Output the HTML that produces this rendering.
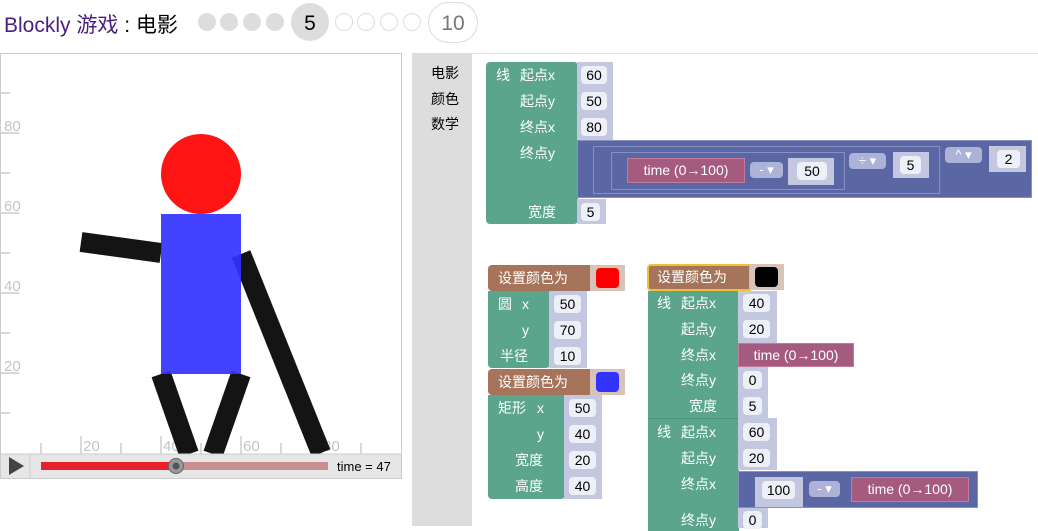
<!DOCTYPE html>
<html><head><meta charset="utf-8"><style>
*{margin:0;padding:0;box-sizing:border-box}
body{width:1038px;height:526px;overflow:hidden;background:#fff;font-family:"Liberation Sans","Noto Sans CJK SC",sans-serif;position:relative}
.a{position:absolute}
.g{position:absolute;background:#5ba58c;border-radius:4px}
.lv{position:absolute;background:#c3c7df}
.f{position:absolute;background:#eef0f7;border-radius:4px;color:#000;font-size:14px;text-align:center;line-height:18px}
.t{position:absolute;color:#fff;font-size:14px;line-height:18px;white-space:nowrap}
.m{position:absolute;background:#5b67a5;border:1px solid #8890c2}
.tm{position:absolute;background:#a55b80;color:#fff;font-size:14px;text-align:center;border:1px solid #c07a9c}
.dd{position:absolute;background:#adb3d6;border-radius:4px;color:#fff;font-size:13px;text-align:center;line-height:16px}
.br{position:absolute;background:#a5745b;border-radius:4px 0 0 4px}
.cf{position:absolute;background:#d8c3b8}
.sw{position:absolute;border-radius:4px}
</style></head><body>
<div class="a" style="left:4px;top:9px;font-size:21px;color:#4b1f82;white-space:nowrap">Blockly 游戏<span style="color:#000"> : 电影</span></div>
<svg class="a" style="left:190px;top:0" width="300" height="46">
<g fill="#ddd"><circle cx="17" cy="22" r="9"/><circle cx="39" cy="22" r="9"/><circle cx="62" cy="22" r="9"/><circle cx="85" cy="22" r="9"/><circle cx="120" cy="22" r="19"/></g>
<g fill="none" stroke="#ddd"><circle cx="154" cy="22" r="8.5"/><circle cx="176" cy="22" r="8.5"/><circle cx="199" cy="22" r="8.5"/><circle cx="222" cy="22" r="8.5"/><rect x="238.5" y="2.5" width="49" height="40" rx="20"/></g>
<text x="120" y="30" font-size="21" text-anchor="middle" fill="#000" font-family="Liberation Sans">5</text>
<text x="263" y="30" font-size="21" text-anchor="middle" fill="#777" font-family="Liberation Sans">10</text>
</svg>
<svg class="a" style="left:0;top:53px" width="402" height="426">
<rect x="0.5" y="0.5" width="401" height="425" fill="#fff" stroke="#ccc"/>
<g stroke="#ccc" stroke-width="1.5"><line x1="0" y1="40" x2="10" y2="40"/><line x1="0" y1="120" x2="10" y2="120"/><line x1="0" y1="200" x2="10" y2="200"/><line x1="0" y1="280" x2="10" y2="280"/><line x1="0" y1="360" x2="10" y2="360"/>
<line x1="0" y1="80" x2="19" y2="80"/><line x1="0" y1="160" x2="19" y2="160"/><line x1="0" y1="240" x2="19" y2="240"/><line x1="0" y1="320" x2="19" y2="320"/>
<line x1="41" y1="401" x2="41" y2="390"/><line x1="121" y1="401" x2="121" y2="390"/><line x1="201" y1="401" x2="201" y2="390"/><line x1="281" y1="401" x2="281" y2="390"/><line x1="361" y1="401" x2="361" y2="390"/>
<line x1="81" y1="401" x2="81" y2="383"/><line x1="161" y1="401" x2="161" y2="383"/><line x1="241" y1="401" x2="241" y2="383"/><line x1="321" y1="401" x2="321" y2="383"/></g>
<g fill="#c4c4c4" font-size="15" font-family="Liberation Sans"><text x="4" y="78">80</text><text x="4" y="158">60</text><text x="4" y="238">40</text><text x="4" y="318">20</text>
<text x="83" y="398">20</text><text x="163" y="398">40</text><text x="243" y="398">60</text><text x="323" y="398">80</text></g>
<g stroke="#141414" stroke-width="20"><line x1="81" y1="189" x2="161" y2="200"/><line x1="241" y1="201" x2="321" y2="400"/><line x1="161" y1="321" x2="189" y2="401"/><line x1="241" y1="321" x2="213" y2="401"/></g>
<circle cx="201" cy="121" r="40" fill="#ff1414"/>
<rect x="161" y="161" width="80" height="160" fill="#3333ff" opacity="0.92"/>
<rect x="1" y="401" width="400" height="24" fill="#e6e6e6"/>
<line x1="0" y1="401" x2="402" y2="401" stroke="#ccc"/>
<line x1="30" y1="401" x2="30" y2="425" stroke="#ccc"/>
<path d="M9 404 L24 413 L9 422Z" fill="#444"/>
<rect x="41" y="409" width="135" height="8" fill="#e8202a"/><rect x="176" y="409" width="152" height="8" fill="#c99090"/>
<circle cx="176" cy="413" r="7.5" fill="#999" stroke="#666"/><circle cx="176" cy="413" r="3.5" fill="#555"/>
<text x="337" y="418" font-size="13" fill="#000" font-family="Liberation Sans">time = 47</text>
</svg>
<div class="a" style="left:412px;top:53px;width:60px;height:473px;background:#ddd"></div>
<div class="a" style="left:472px;top:53px;width:566px;height:1px;background:#e4e4e4"></div>
<div class="a" style="left:431px;top:61px;font-size:14px;line-height:25.5px;color:#000">电影<br>颜色<br>数学</div>

<div class="g" style="left:486px;top:62px;width:92px;height:162px"></div>
<div class="lv" style="left:577px;top:62px;width:36px;height:78px"></div>
<div class="lv" style="left:577px;top:199px;width:29px;height:25px"></div>
<div class="t" style="left:496px;top:66px">线</div>
<div class="t" style="left:520px;top:66px">起点x</div>
<div class="t" style="left:520px;top:92px">起点y</div>
<div class="t" style="left:520px;top:118px">终点x</div>
<div class="t" style="left:520px;top:144px">终点y</div>
<div class="t" style="left:528px;top:203px">宽度</div>
<div class="f" style="left:581px;top:66px;width:26px">60</div>
<div class="f" style="left:581px;top:92px;width:26px">50</div>
<div class="f" style="left:581px;top:118px;width:26px">80</div>
<div class="f" style="left:581px;top:203px;width:19px">5</div>
<div class="m" style="left:577px;top:140px;width:455px;height:58px"></div>
<div class="m" style="left:593px;top:146px;width:347px;height:48px"></div>
<div class="m" style="left:611px;top:152px;width:234px;height:38px"></div>
<div class="tm" style="left:627px;top:158px;width:118px;height:25px;line-height:23px">time (0→100)</div>
<div class="dd" style="left:750px;top:162px;width:33px">- ▾</div>
<div class="lv" style="left:788px;top:158px;width:46px;height:27px"></div>
<div class="f" style="left:797px;top:162px;width:30px">50</div>
<div class="dd" style="left:849px;top:153px;width:37px">÷ ▾</div>
<div class="lv" style="left:893px;top:152px;width:36px;height:26px"></div>
<div class="f" style="left:900px;top:156px;width:21px">5</div>
<div class="dd" style="left:945px;top:147px;width:37px">^ ▾</div>
<div class="lv" style="left:989px;top:146px;width:37px;height:26px"></div>
<div class="f" style="left:997px;top:150px;width:23px">2</div>

<div class="br" style="left:488px;top:265px;width:103px;height:26px"></div>
<div class="cf" style="left:590px;top:265px;width:35px;height:26px"></div>
<div class="sw" style="left:596px;top:268px;width:23px;height:20px;background:#f00"></div>
<div class="t" style="left:498px;top:269px">设置颜色为</div>
<div class="g" style="left:488px;top:291px;width:62px;height:77px;border-radius:0 0 4px 4px"></div>
<div class="lv" style="left:549px;top:291px;width:38px;height:77px"></div>
<div class="t" style="left:498px;top:295px">圆</div><div class="t" style="left:522px;top:295px">x</div>
<div class="t" style="left:522px;top:321px">y</div>
<div class="t" style="left:500px;top:347px">半径</div>
<div class="f" style="left:554px;top:295px;width:27px">50</div>
<div class="f" style="left:554px;top:321px;width:27px">70</div>
<div class="f" style="left:554px;top:347px;width:27px">10</div>
<div class="br" style="left:488px;top:369px;width:103px;height:26px"></div>
<div class="cf" style="left:590px;top:369px;width:35px;height:26px"></div>
<div class="sw" style="left:596px;top:372px;width:23px;height:20px;background:#3333ff"></div>
<div class="t" style="left:498px;top:373px">设置颜色为</div>
<div class="g" style="left:488px;top:395px;width:77px;height:104px;border-radius:0 0 4px 4px"></div>
<div class="lv" style="left:564px;top:395px;width:38px;height:104px"></div>
<div class="t" style="left:498px;top:399px">矩形</div><div class="t" style="left:537px;top:399px">x</div>
<div class="t" style="left:537px;top:425px">y</div>
<div class="t" style="left:515px;top:451px">宽度</div>
<div class="t" style="left:515px;top:477px">高度</div>
<div class="f" style="left:569px;top:399px;width:27px">50</div>
<div class="f" style="left:569px;top:425px;width:27px">40</div>
<div class="f" style="left:569px;top:451px;width:27px">20</div>
<div class="f" style="left:569px;top:477px;width:27px">40</div>

<div class="br" style="left:647px;top:264px;width:104px;height:27px;border:2px solid #f2c034"></div>
<div class="cf" style="left:750px;top:264px;width:34px;height:26px"></div>
<div class="sw" style="left:755px;top:267px;width:23px;height:20px;background:#000"></div>
<div class="t" style="left:657px;top:268px">设置颜色为</div>
<div class="g" style="left:648px;top:291px;width:91px;height:240px;border-radius:0"></div>
<div class="a" style="left:648px;top:418px;width:91px;height:1px;background:#4a917a"></div>
<div class="lv" style="left:738px;top:291px;width:39px;height:52px"></div>
<div class="lv" style="left:738px;top:366px;width:30px;height:52px"></div>
<div class="lv" style="left:738px;top:418px;width:39px;height:52px"></div>
<div class="lv" style="left:738px;top:508px;width:30px;height:20px"></div>
<div class="t" style="left:657px;top:294px">线</div><div class="t" style="left:681px;top:294px">起点x</div>
<div class="t" style="left:681px;top:320px">起点y</div>
<div class="t" style="left:681px;top:346px">终点x</div>
<div class="t" style="left:681px;top:371px">终点y</div>
<div class="t" style="left:689px;top:397px">宽度</div>
<div class="f" style="left:743px;top:294px;width:27px">40</div>
<div class="f" style="left:743px;top:320px;width:27px">20</div>
<div class="tm" style="left:738px;top:343px;width:116px;height:24px;line-height:22px">time (0→100)</div>
<div class="f" style="left:743px;top:371px;width:19px">0</div>
<div class="f" style="left:743px;top:397px;width:19px">5</div>
<div class="t" style="left:657px;top:423px">线</div><div class="t" style="left:681px;top:423px">起点x</div>
<div class="t" style="left:681px;top:449px">起点y</div>
<div class="t" style="left:681px;top:475px">终点x</div>
<div class="t" style="left:681px;top:511px">终点y</div>
<div class="f" style="left:743px;top:423px;width:27px">60</div>
<div class="f" style="left:743px;top:449px;width:27px">20</div>
<div class="m" style="left:738px;top:471px;width:240px;height:37px"></div>
<div class="lv" style="left:755px;top:477px;width:48px;height:30px"></div>
<div class="f" style="left:762px;top:481px;width:33px">100</div>
<div class="dd" style="left:809px;top:481px;width:31px">- ▾</div>
<div class="tm" style="left:851px;top:477px;width:118px;height:25px;line-height:23px">time (0→100)</div>
<div class="f" style="left:743px;top:511px;width:19px">0</div>
</body></html>
